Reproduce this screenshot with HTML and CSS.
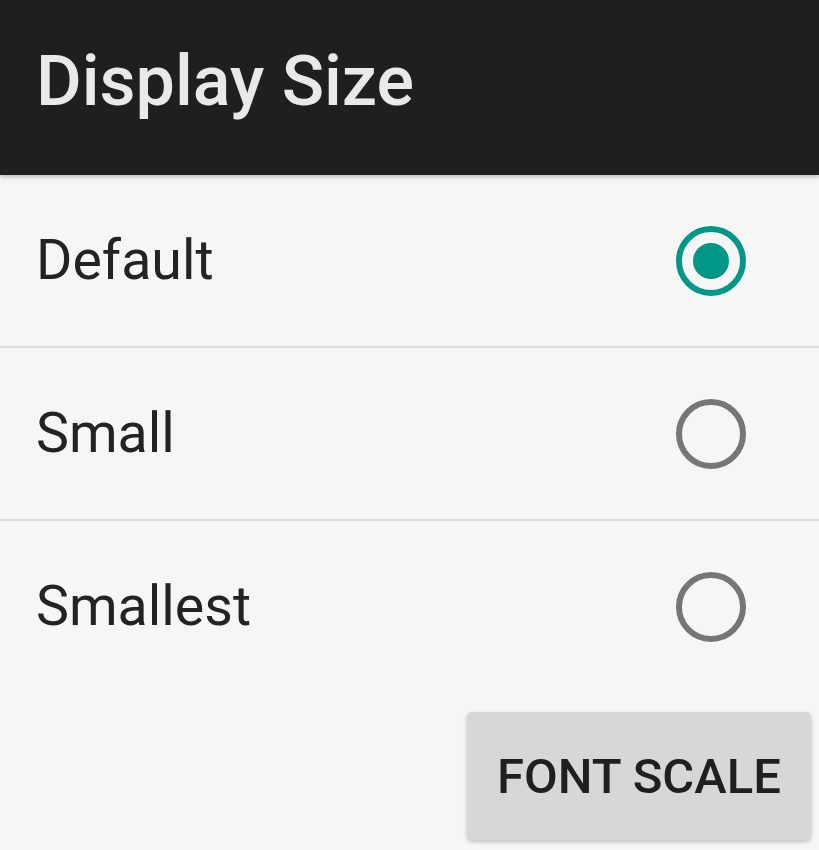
FILE: index.html
```html
<!DOCTYPE html>
<html>
<head>
<meta charset="utf-8">
<link rel="stylesheet" href="styles.css">
</head>
<body>
<div class="app">
  <header class="bar"><h1 class="title">Display Size</h1></header>
  <ul class="list">
    <li class="row"><span class="label">Default</span><span class="radio checked"><span class="dot"></span></span></li>
    <li class="row"><span class="label">Small</span><span class="radio"></span></li>
    <li class="row last"><span class="label">Smallest</span><span class="radio"></span></li>
  </ul>
  <div class="actions"><button class="btn">FONT SCALE</button></div>
</div>
</body>
</html>
```
FILE: styles.css
```css
html, body { margin: 0; padding: 0; }
body { background: #f6f7f5; font-family: Roboto, "Noto Sans", sans-serif; width: 819px; height: 850px; overflow: hidden; }
.app { display: flex; flex-direction: column; }
.bar { background: #1f201e; height: 175px; box-sizing: border-box; padding: 46px 0 0 36px; box-shadow: 0 2px 4px rgba(0,0,0,0.25); position: relative; z-index: 1; }
.title { margin: 0; font-size: 70px; line-height: 1; font-weight: 500; color: #e9e9e7; }
.list { list-style: none; margin: 0; padding: 0; }
.row { height: 171px; display: flex; align-items: center; justify-content: space-between; padding: 0 73px 0 36px; border-bottom: 2px solid #dcdddb; }
.row.last { border-bottom: none; }
.label { font-size: 55.5px; line-height: 1; color: #222322; }
.radio { width: 70px; height: 70px; box-sizing: border-box; border: 6.5px solid #767676; border-radius: 50%; display: flex; align-items: center; justify-content: center; }
.radio.checked { border-color: #009688; }
.dot { width: 36px; height: 36px; border-radius: 50%; background: #009688; }
.actions { display: flex; justify-content: flex-end; padding: 20px 8px 0 0; }
.btn { width: 344px; height: 128px; border: none; border-radius: 5px; background: #d7d8d6; color: #1e1f1e; font-family: Roboto, "Noto Sans", sans-serif; font-weight: 500; font-size: 49px; box-shadow: 0 2px 4px rgba(0,0,0,0.22); padding: 0; }
```
